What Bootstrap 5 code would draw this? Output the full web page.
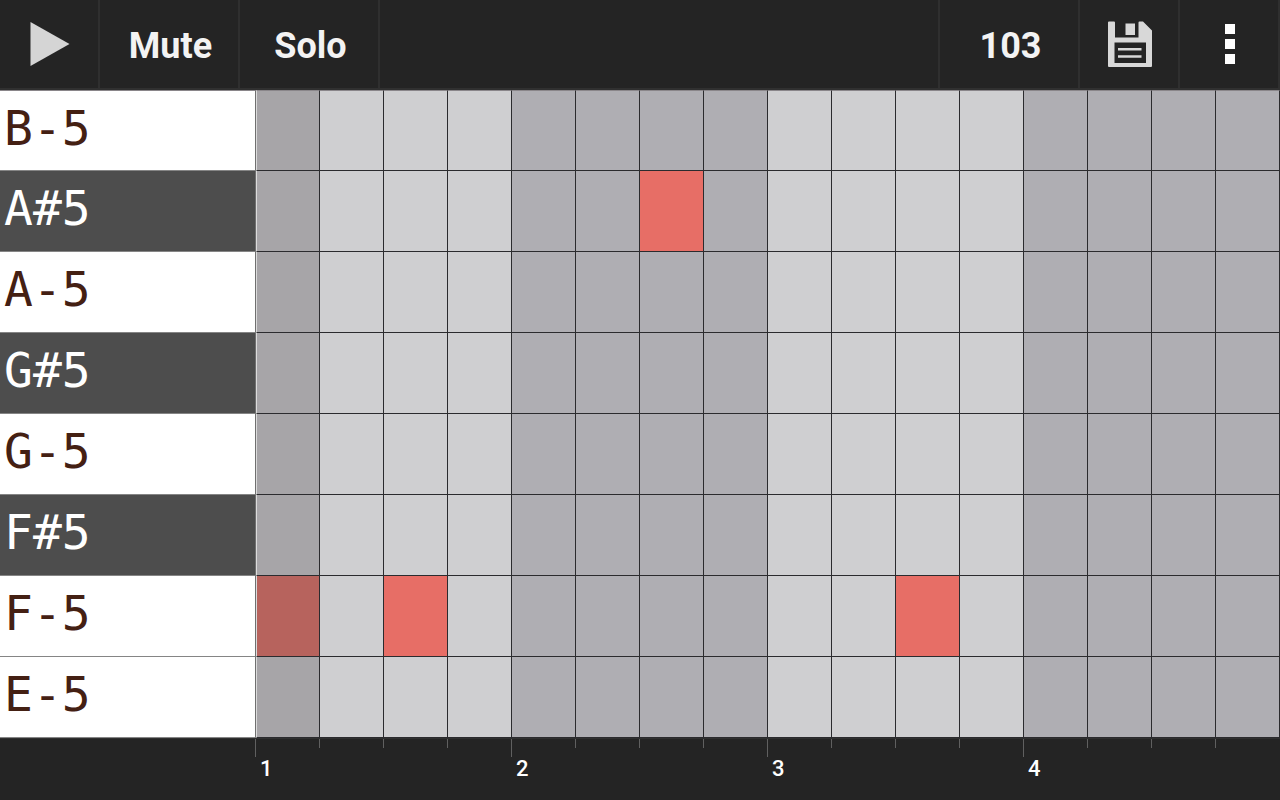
<!DOCTYPE html>
<html lang="en">
<head>
<meta charset="utf-8">
<meta name="viewport" content="width=device-width, initial-scale=1">
<title>Pattern editor</title>
<link rel="stylesheet" href="https://cdn.jsdelivr.net/npm/bootstrap@5.3.0/dist/css/bootstrap.min.css">
<style>
  body { background: #242424; font-family: Roboto, sans-serif; color: #f3f3f3; }
  button { appearance: none; border: 0; border-radius: 0; }
  .toolbar { height: 90px; border-bottom: 2px solid #303030; }
  .tool { width: 140px; background: none; color: #f3f3f3; font-size: 36px; font-weight: 700; line-height: 44px; border-right: 2px solid #2f2f2f; padding: 4px 0 0 3px; }
  .tool-icon { width: 100px; padding: 0; }
  .tool-gap { border-right: 2px solid #2f2f2f; }

  .roll { min-height: 0; }
  .pitch { display: grid; grid-template-columns: 20% repeat(16, 1fr); flex: 1 1 0; min-height: 0; }
  .pitch:first-child > * { border-top: 1px solid #8a868a; }
  .note-key { background: #fff; color: #442013; border-right: 1px solid #707070; border-bottom: 1px solid #858585; font-family: "DejaVu Sans Mono", monospace; font-size: 48px; line-height: 56px; padding: 0 0 6px 4px; }
  .sharp .note-key { background: #4d4d4d; color: #fff; }
  .step { background: #cfcfd1; border-right: 1px solid #2b2b2e; border-bottom: 1px solid #2b2b2e; }
  .step-even { background: #afaeb3; }
  .step-now { background: #a7a5a8; border-left: 1px solid #dcdcdc; }
  .step-on { background: #e76e66; }
  .step-now.step-on { background: #b7635d; }

  .ruler { height: 62px; border-top: 1px solid #303030; }
  .bar-mark { width: 20%; font-size: 22px; font-weight: 500; line-height: 24px; color: #fff; }
  .ticks { height: 18px; margin-left: -1px; margin-right: 1px; }
  .ticks span { width: 25%; height: 9px; border-left: 1px solid #606060; }
  .ticks span:first-child { height: 18px; }
</style>
</head>
<body class="vh-100 d-flex flex-column overflow-hidden">

<header class="toolbar d-flex flex-shrink-0">
  <button type="button" class="tool tool-icon" aria-label="Play">
    <svg class="d-block" width="98" height="88" viewBox="0 0 98 88" aria-hidden="true"><path d="M30.5 22v44L69.500 44z" fill="#d5d5d5"/></svg>
  </button>
  <button type="button" class="tool">Mute</button>
  <button type="button" class="tool">Solo</button>
  <div class="tool-gap flex-grow-1"></div>
  <button type="button" class="tool">103</button>
  <button type="button" class="tool tool-icon" aria-label="Save">
    <svg class="d-block" width="98" height="88" viewBox="0 0 98 88" aria-hidden="true">
      <path fill="#d8d8d8" fill-rule="evenodd" d="M29 21.500h5q1 0 1 1V37.500h23.500V22.500q0-1 1-1h3.500L72 30.500V66q0 1-1 1H29q-1 0-1-1V22.500q0-1 1-1zM34.500 42.500v20.500h31.500V42.500z"/>
      <path fill="#d8d8d8" d="M45.500 23.500h9.500v11.500h-9.500zM38 48h23.500v2.500H38zM38 55.300h23.500v2.500H38z"/>
    </svg>
  </button>
  <button type="button" class="tool tool-icon" aria-label="Menu">
    <svg class="d-block" width="98" height="88" viewBox="0 0 98 88" aria-hidden="true"><path fill="#fff" d="M45 24h10v10H45zM45 39h10v10H45zM45 54h10v10H45z"/></svg>
  </button>
</header>

<main class="roll flex-fill d-flex flex-column" id="roll">
  <div class="pitch"><button type="button" class="note-key text-start">B-5</button></div>
  <div class="pitch sharp" data-on="6"><button type="button" class="note-key text-start">A#5</button></div>
  <div class="pitch"><button type="button" class="note-key text-start">A-5</button></div>
  <div class="pitch sharp"><button type="button" class="note-key text-start">G#5</button></div>
  <div class="pitch"><button type="button" class="note-key text-start">G-5</button></div>
  <div class="pitch sharp"><button type="button" class="note-key text-start">F#5</button></div>
  <div class="pitch" data-on="0,2,10"><button type="button" class="note-key text-start">F-5</button></div>
  <div class="pitch"><button type="button" class="note-key text-start">E-5</button></div>
</main>

<footer class="ruler d-flex justify-content-end flex-shrink-0">
  <div class="bar-mark"><div class="ticks d-flex"><span></span><span></span><span></span><span></span></div><div class="ps-1">1</div></div>
  <div class="bar-mark"><div class="ticks d-flex"><span></span><span></span><span></span><span></span></div><div class="ps-1">2</div></div>
  <div class="bar-mark"><div class="ticks d-flex"><span></span><span></span><span></span><span></span></div><div class="ps-1">3</div></div>
  <div class="bar-mark"><div class="ticks d-flex"><span></span><span></span><span></span><span></span></div><div class="ps-1">4</div></div>
</footer>

<script src="https://cdn.jsdelivr.net/npm/bootstrap@5.3.0/dist/js/bootstrap.bundle.min.js"></script>
<script>
  // Sixteen toggle steps per pitch; every other beat is shaded, and the first step is the play position.
  document.querySelectorAll('.pitch').forEach(row => {
    const on = (row.dataset.on || '').split(',');
    const name = row.textContent.trim();
    for (let i = 0; i < 16; i++) {
      const step = document.createElement('button');
      step.type = 'button';
      step.className = 'step p-0';
      step.setAttribute('aria-label', name + ' step ' + (i + 1));
      if (Math.floor(i / 4) % 2) step.classList.add('step-even');
      if (i === 0) step.classList.add('step-now');
      if (on.includes(String(i))) step.classList.add('step-on');
      step.addEventListener('click', () => step.classList.toggle('step-on'));
      row.append(step);
    }
  });
</script>
</body>
</html>
